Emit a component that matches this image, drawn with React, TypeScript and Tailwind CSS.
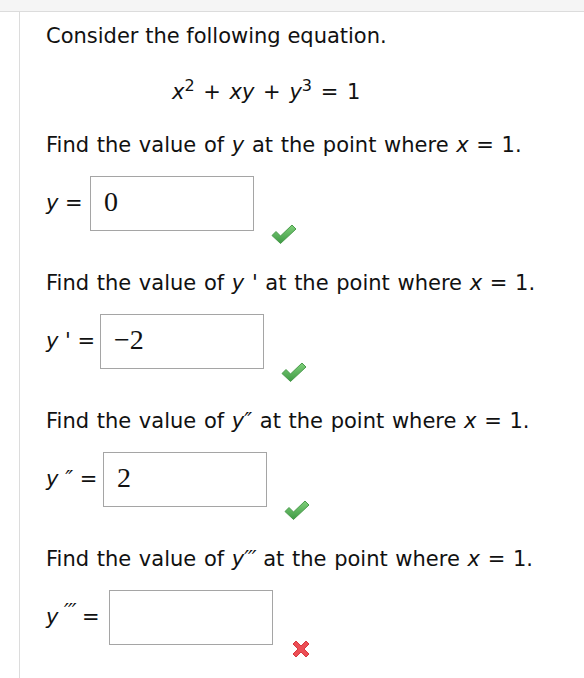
import type { ReactNode } from "react";

function Check() {
  return (
    <svg width="28" height="22" viewBox="0 0 28 22" className="shrink-0">
      <defs>
        <linearGradient id="ckg" x1="0" y1="0" x2="0" y2="1">
          <stop offset="0" stopColor="#7fd07a" />
          <stop offset="1" stopColor="#3f9a45" />
        </linearGradient>
      </defs>
      <path
        d="M2 12.5 L6 8.5 L10.5 13 L22 2 L26 6 L10.5 20.5 Z"
        fill="url(#ckg)"
        stroke="#4a9a4c"
        strokeWidth="1"
        strokeLinejoin="round"
      />
    </svg>
  );
}

function Cross() {
  return (
    <svg width="24" height="24" viewBox="0 0 24 24" className="shrink-0">
      <path
        d="M4 7 L7 4 L12 9 L17 4 L20 7 L15 12 L20 17 L17 20 L12 15 L7 20 L4 17 L9 12 Z"
        fill="#ec4e55"
        stroke="#d9383f"
        strokeWidth="1"
        strokeLinejoin="round"
      />
    </svg>
  );
}

function Sup({ children }: { children: ReactNode }) {
  return <span className="relative -top-[8px] text-[16px] leading-none">{children}</span>;
}

function Pergunta({ marca }: { marca: ReactNode }) {
  return (
    <p className="leading-[26px] [word-spacing:1px]">
      Find the value of <i>y</i>
      {marca} at the point where <i>x</i> = 1.
    </p>
  );
}

function Resposta({
  rotulo,
  valor,
  largura,
  correta,
}: {
  rotulo: ReactNode;
  valor: string;
  largura: string;
  correta: boolean;
}) {
  return (
    <div className="mt-[18px] flex items-start">
      <div className={`flex h-[55px] items-center ${largura}`}>{rotulo}</div>
      <div
        className="flex h-[55px] w-[164px] items-center border border-[#a5a5a5] bg-white pl-[13px] pb-[4px] text-[28px] text-[#111]"
        style={{ fontFamily: '"Liberation Serif", "DejaVu Serif", serif' }}
      >
        {valor}
      </div>
      <div className="ml-[16px] mt-[47px]">{correta ? <Check /> : <Cross />}</div>
    </div>
  );
}

export default function App() {
  return (
    <div
      className="h-[678px] w-[584px] overflow-hidden bg-white text-[21px] text-[#111]"
      style={{ fontFamily: '"DejaVu Sans", Verdana, sans-serif' }}
    >
      <div className="h-[12px] border-b border-[#dcdcdc] bg-[#f5f5f5]" />
      <div className="flex h-[666px]">
        <div className="w-[20px] shrink-0 border-r border-[#dcdcdc]" />
        <div className="pl-[26px]">
          <p className="mt-[11px] leading-[26px]">Consider the following equation.</p>
          <p className="mt-[30px] pl-[126px] leading-[26px] [word-spacing:2px]">
            <i>x</i>
            <Sup>2</Sup> + <i>xy</i> + <i>y</i>
            <Sup>3</Sup> = 1
          </p>

          <div className="mt-[27px]">
            <Pergunta marca="" />
          </div>
          <Resposta
            rotulo={
              <span>
                <i>y</i> =
              </span>
            }
            valor="0"
            largura="w-[44px]"
            correta
          />

          <div className="mt-[25px]">
            <Pergunta marca={<span> '</span>} />
          </div>
          <Resposta
            rotulo={
              <span>
                <i>y</i> ' =
              </span>
            }
            valor="−2"
            largura="w-[54px]"
            correta
          />

          <div className="mt-[25px]">
            <Pergunta marca={<i>″</i>} />
          </div>
          <Resposta
            rotulo={
              <span>
                <i>y</i> <i>″</i> =
              </span>
            }
            valor="2"
            largura="w-[57px]"
            correta
          />

          <div className="mt-[25px]">
            <Pergunta marca={<i className="tracking-[-1px]">′′′</i>} />
          </div>
          <Resposta
            rotulo={
              <span>
                <i>y</i>
                <span className="relative -top-[5px] leading-none">
                  <i className="tracking-[-1px]"> ′′′</i>
                </span>{" "}
                =
              </span>
            }
            valor=""
            largura="w-[63px]"
            correta={false}
          />
        </div>
      </div>
    </div>
  );
}
